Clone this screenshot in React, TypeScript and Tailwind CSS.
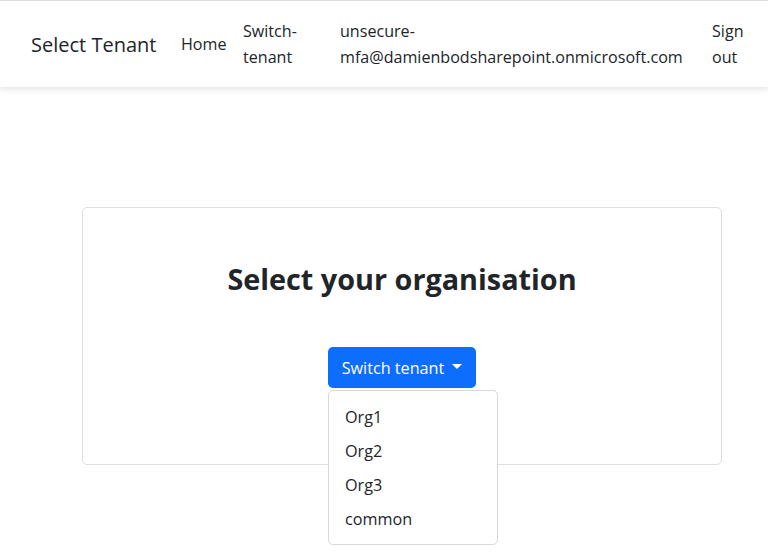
export default function App() {
  return (
    <div className="h-[557px] w-[768px] overflow-hidden bg-white font-['Open_Sans',sans-serif] text-[16.1px] leading-[26px] text-[#212529]">
      <nav className="flex h-[87px] items-center border-t border-[#dedede] bg-white pl-[30px] shadow-[0_2px_7px_rgba(0,0,0,0.12)]">
        <span className="mr-[26px] w-[125px] whitespace-nowrap pl-[1px] text-[20px] leading-[33px]">Select Tenant</span>
        <span className="mr-[17px] w-[45px]">Home</span>
        <span className="mr-[42px] w-[55px]">Switch-tenant</span>
        <span className="mr-[30px] w-[342px]">unsecure-mfa@damienbodsharepoint.onmicrosoft.com</span>
        <span className="w-[34px]">Sign out</span>
      </nav>
      <div className="px-[82px] pt-[120px]">
        <div className="flex h-[258px] w-[640px] flex-col items-center rounded-[5px] border border-[#dfdfdf] pt-[51px]">
          <h1 className="text-[28.8px] font-bold leading-[40px]">Select your organisation</h1>
          <div className="relative mt-[48px]">
            <button className="flex h-[41px] w-[148px] items-center justify-center gap-[8px] rounded-[5px] bg-[#0d6efd] text-[16.2px] text-white">
              Switch tenant
              <span className="mt-[-2px] h-0 w-0 border-x-[5px] border-t-[5px] border-x-transparent border-t-white" />
            </button>
            <div className="absolute left-0 top-[43px] flex h-[155px] w-[170px] flex-col rounded-[5px] border border-[#d9d9d9] bg-white py-[9px]">
              {["Org1", "Org2", "Org3", "common"].map((o) => (
                <span key={o} className="block px-[16px] py-[4px] text-[16.2px] leading-[26px]">{o}</span>
              ))}
            </div>
          </div>
        </div>
      </div>
    </div>
  );
}
